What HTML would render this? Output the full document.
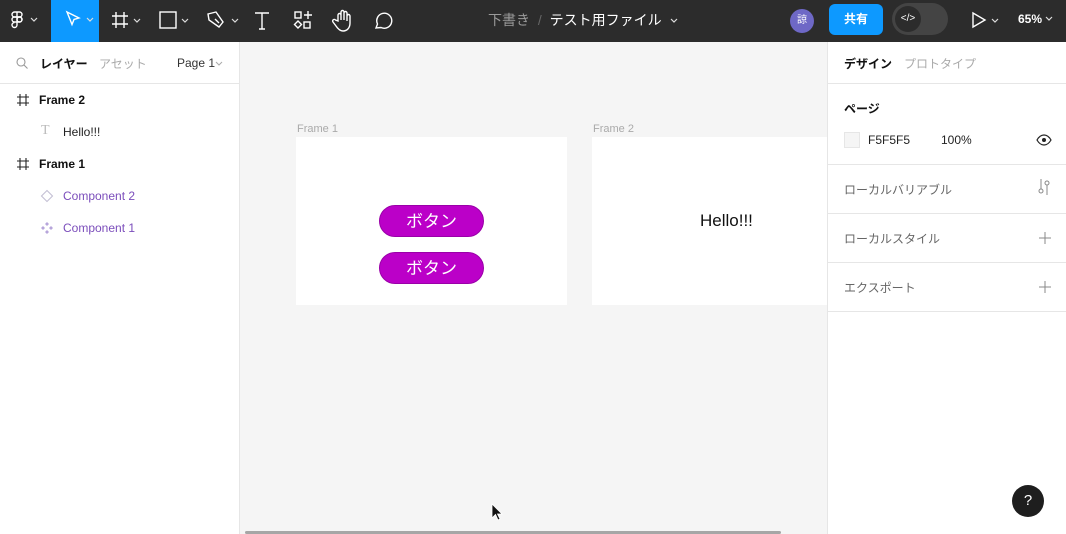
<!DOCTYPE html>
<html><head><meta charset="utf-8"><style>
*{margin:0;padding:0;box-sizing:border-box}
body{width:1066px;height:534px;overflow:hidden;background:#f5f5f5;font-family:"Liberation Sans","Noto Sans CJK JP",sans-serif;position:relative}
.a{position:absolute}
.top{left:0;top:0;width:1066px;height:42px;background:#2c2c2c}
.ic{stroke:#fff;fill:none;stroke-width:1.4}
.chev{stroke:#ddd;fill:none;stroke-width:1.2}
.lp{left:0;top:42px;width:240px;height:492px;background:#fff;border-right:1px solid #e6e6e6}
.rp{left:827px;top:42px;width:239px;height:492px;background:#fff;border-left:1px solid #e6e6e6}
.t12{font-size:12px}
.hr{height:1px;background:#e6e6e6;left:0;width:239px}
.btn{left:379px;width:105px;height:32px;border-radius:16px;background:#bb00c8;border:1px solid #9a00a8;color:#fff;font-size:17px;text-align:center;line-height:32px}
</style></head><body>
<div class="a top">
 <svg class="a" style="left:8px;top:9px" width="34" height="22">
  <g class="ic" stroke-width="1.3"><rect x="4" y="3" width="10" height="5" rx="2.5"/><rect x="4" y="8" width="10" height="5" rx="2.5"/><path d="M9 13v3a2.5 2.5 0 1 1-2.5-2.5M9 3v10"/><circle cx="11.5" cy="10.5" r="2.5"/></g>
  <path class="chev" d="M23 9l3 3 3-3"/></svg>
 <div class="a" style="left:51px;top:0;width:48px;height:42px;background:#0d99ff"></div>
 <svg class="a" style="left:51px;top:0" width="48" height="42"><path class="ic" d="M16 12l12 6-5 1.5-2 5z"/><path class="chev" d="M36 18l3 3 3-3" stroke="#fff"/></svg>
 <svg class="a" style="left:108px;top:8px" width="40" height="26"><path class="ic" d="M8 4v16M16 4v16M4 8h16M4 16h16"/><path class="chev" d="M26 11l3 3 3-3"/></svg>
 <svg class="a" style="left:155px;top:8px" width="40" height="26"><rect class="ic" x="5" y="4" width="16" height="16"/><path class="chev" d="M27 11l3 3 3-3"/></svg>
 <svg class="a" style="left:203px;top:8px" width="40" height="26"><path class="ic" d="M5 6l8-2 7 10-4 5-10-7z M12 11l4 4"/><path class="chev" d="M29 11l3 3 3-3"/></svg>
 <svg class="a" style="left:250px;top:8px" width="26" height="26"><path class="ic" d="M5 5h14M12 5v16M9 21h6"/></svg>
 <svg class="a" style="left:290px;top:8px" width="26" height="26"><g class="ic" stroke-width="1.3"><rect x="5" y="4" width="6" height="6"/><path d="M18 3v8M14 7h8M8 13l3.5 3.5L8 20l-3.5-3.5z"/><rect x="14" y="14" width="6" height="6"/></g></svg>
 <svg class="a" style="left:330px;top:7px" width="26" height="28"><path class="ic" d="M8 14V8a1.5 1.5 0 0 1 3 0v5V5a1.5 1.5 0 0 1 3 0v8V6a1.5 1.5 0 0 1 3 0v8V9a1.5 1.5 0 0 1 3 0v7c0 5-3 8-7 8-3 0-5-2-7-5l-3-4a1.5 1.5 0 0 1 2.5-2z"/></svg>
 <svg class="a" style="left:370px;top:8px" width="26" height="26"><path class="ic" d="M6 20l1.5-4A7.5 7.5 0 1 1 11 19.5z"/></svg>
 <div class="a" style="left:488px;top:10px;font-size:14px;color:#9a9a9a">下書き <span style="color:#666;margin:0 4px">/</span> <span style="color:#fff">テスト用ファイル</span></div>
 <svg class="a" style="left:668px;top:14px" width="12" height="12"><path class="chev" d="M3 5l3 3 3-3"/></svg>
 <div class="a" style="left:790px;top:9px;width:24px;height:24px;border-radius:50%;background:#6e68c6;color:#fff;font-size:10px;text-align:center;line-height:24px">諒</div>
 <div class="a" style="left:829px;top:4px;width:54px;height:31px;border-radius:6px;background:#0d99ff;color:#fff;font-size:12px;font-weight:bold;text-align:center;line-height:31px">共有</div>
 <div class="a" style="left:892px;top:3px;width:56px;height:32px;border-radius:16px;background:#444"></div>
 <div class="a" style="left:895px;top:6px;width:26px;height:26px;border-radius:50%;background:#2c2c2c;color:#fff;font-size:10px;text-align:center;line-height:26px">&lt;/&gt;</div>
 <svg class="a" style="left:968px;top:9px" width="34" height="22"><path class="ic" d="M5 4l12 7-12 7z"/><path class="chev" d="M24 10l3 3 3-3"/></svg>
 <div class="a" style="left:1018px;top:12px;font-size:12px;color:#fff;font-weight:bold">65%</div>
 <svg class="a" style="left:1043px;top:13px" width="12" height="12"><path class="chev" d="M3 4l3 3 3-3"/></svg>
</div>

<div class="a lp">
 <svg class="a" style="left:15px;top:14px" width="14" height="14"><circle cx="6" cy="6" r="4" fill="none" stroke="#999" stroke-width="1.1"/><path d="M9 9l3.5 3.5" stroke="#999" stroke-width="1.1"/></svg>
 <div class="a t12" style="left:40px;top:13px;font-weight:bold;color:#111">レイヤー</div>
 <div class="a t12" style="left:99px;top:13px;color:#aaa">アセット</div>
 <div class="a t12" style="left:177px;top:14px;color:#333">Page 1</div>
 <svg class="a" style="left:214px;top:17px" width="10" height="10"><path d="M2 3l3 3 3-3" stroke="#aaa" fill="none"/></svg>
 <div class="a" style="left:0;top:41px;width:239px;height:1px;background:#e6e6e6"></div>
 <svg class="a" style="left:16px;top:51px" width="14" height="14"><path d="M4 1v12M10 1v12M1 4h12M1 10h12" stroke="#222" stroke-width="1.1" fill="none"/></svg>
 <div class="a t12" style="left:39px;top:51px;font-weight:bold;color:#111">Frame 2</div>
 <div class="a" style="left:41px;top:81px;font-family:'Liberation Serif',serif;font-size:14px;color:#bbb">T</div>
 <div class="a t12" style="left:63px;top:83px;color:#222">Hello!!!</div>
 <svg class="a" style="left:16px;top:115px" width="14" height="14"><path d="M4 1v12M10 1v12M1 4h12M1 10h12" stroke="#222" stroke-width="1.1" fill="none"/></svg>
 <div class="a t12" style="left:39px;top:115px;font-weight:bold;color:#111">Frame 1</div>
 <svg class="a" style="left:40px;top:147px" width="14" height="14"><path d="M7 1.5l5.5 5.5L7 12.5 1.5 7z" stroke="#c4c0d4" stroke-width="1.1" fill="none"/></svg>
 <div class="a t12" style="left:63px;top:147px;color:#7b4dbb">Component 2</div>
 <svg class="a" style="left:40px;top:179px" width="14" height="14" fill="#b7a6db"><path d="M7 1l2 2-2 2-2-2zM7 9l2 2-2 2-2-2zM3 5l2 2-2 2-2-2zM11 5l2 2-2 2-2-2z"/></svg>
 <div class="a t12" style="left:63px;top:179px;color:#7b4dbb">Component 1</div>
</div>

<div class="a" style="left:297px;top:123px;font-size:11px;color:#aaa">Frame 1</div>
<div class="a" style="left:296px;top:137px;width:271px;height:168px;background:#fff"></div>
<div class="a btn" style="top:205px">ボタン</div>
<div class="a btn" style="top:252px">ボタン</div>
<div class="a" style="left:593px;top:123px;font-size:11px;color:#aaa">Frame 2</div>
<div class="a" style="left:592px;top:137px;width:235px;height:168px;background:#fff"></div>
<div class="a" style="left:700px;top:211px;font-size:17px;color:#111">Hello!!!</div>
<div class="a" style="left:245px;top:531px;width:536px;height:3px;background:#a6a6a6;border-radius:2px"></div>
<svg class="a" style="left:490px;top:503px" width="14" height="20"><path d="M2 1v14l3.5-3.5 2.5 5.5 2-1-2.5-5H12z" fill="#111" stroke="#fff" stroke-width=".8"/></svg>

<div class="a rp">
 <div class="a t12" style="left:16px;top:13px;font-weight:bold;color:#111">デザイン</div>
 <div class="a t12" style="left:76px;top:13px;color:#aaa">プロトタイプ</div>
 <div class="a hr" style="top:41px"></div>
 <div class="a t12" style="left:16px;top:58px;font-weight:bold;color:#111">ページ</div>
 <div class="a" style="left:16px;top:90px;width:16px;height:16px;background:#f5f5f5;border:1px solid #e6e6e6"></div>
 <div class="a t12" style="left:40px;top:91px;color:#222">F5F5F5</div>
 <div class="a t12" style="left:113px;top:91px;color:#222">100%</div>
 <svg class="a" style="left:208px;top:92px" width="16" height="12"><path d="M1 6c2-3.5 4-5 7-5s5 1.5 7 5c-2 3.5-4 5-7 5S3 9.5 1 6z" fill="none" stroke="#222" stroke-width="1.2"/><circle cx="8" cy="6" r="2" fill="#222"/></svg>
 <div class="a hr" style="top:122px"></div>
 <div class="a t12" style="left:16px;top:139px;color:#666">ローカルバリアブル</div>
 <svg class="a" style="left:208px;top:136px" width="16" height="18"><path d="M5 1v10M11 7v10" stroke="#888" fill="none"/><circle cx="5" cy="13" r="2" fill="#fff" stroke="#888"/><circle cx="11" cy="5" r="2" fill="#fff" stroke="#888"/></svg>
 <div class="a hr" style="top:171px"></div>
 <div class="a t12" style="left:16px;top:188px;color:#666">ローカルスタイル</div>
 <svg class="a" style="left:210px;top:189px" width="14" height="14"><path d="M7 1v12M1 7h12" stroke="#888" fill="none"/></svg>
 <div class="a hr" style="top:220px"></div>
 <div class="a t12" style="left:16px;top:237px;color:#666">エクスポート</div>
 <svg class="a" style="left:210px;top:238px" width="14" height="14"><path d="M7 1v12M1 7h12" stroke="#888" fill="none"/></svg>
 <div class="a hr" style="top:269px"></div>
 <div class="a" style="left:184px;top:443px;width:32px;height:32px;border-radius:50%;background:#1e1e1e;color:#fff;font-size:15px;text-align:center;line-height:32px">?</div>
</div>
</body></html>
